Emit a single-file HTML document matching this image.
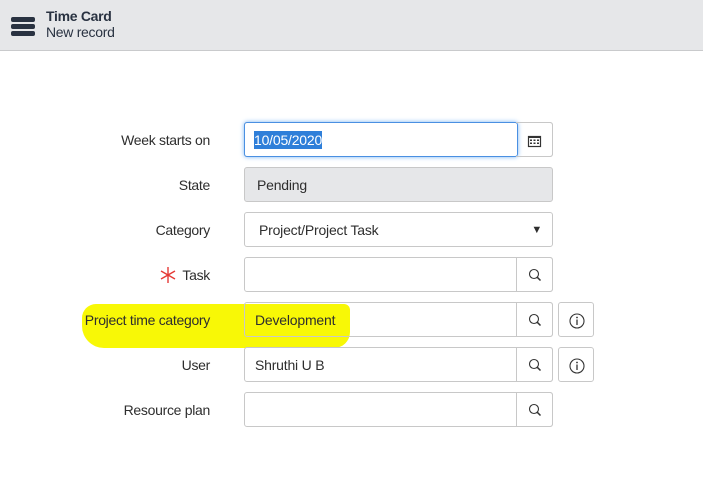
<!DOCTYPE html>
<html><head><style>
*{box-sizing:border-box;margin:0;padding:0}
body{width:703px;height:477px;background:#fff;font-family:"Liberation Sans",sans-serif;position:relative;overflow:hidden;color:#2e2e2e}
.hdr{position:absolute;left:0;top:0;width:703px;height:51px;background:#e6e7e9;border-bottom:1px solid #c9cacc}
.ham{position:absolute;left:11px;width:24px;height:5px;background:#293241;border-radius:2px}
.t1{position:absolute;left:46px;top:8px;font-size:14px;color:#293241;font-weight:bold;letter-spacing:-0.3px}
.t2{position:absolute;left:46px;top:24px;font-size:14px;color:#293241;letter-spacing:-0.3px}
.hl{position:absolute;left:82px;top:304px;width:268px;height:44px;background:#f8f806;border-radius:14px 6px 16px 22px}
.lbl{position:absolute;right:493px;font-size:14px;color:#2e2e2e;line-height:16px;letter-spacing:-0.3px}
.in{position:absolute;left:244px;width:309px;height:35px;border:1px solid #c8c8c8;border-radius:3px;font-size:14px;padding-left:14px;line-height:35px;background:transparent;letter-spacing:-0.2px}
.btn{position:absolute;left:516px;width:37px;height:35px;border:1px solid #c8c8c8;border-radius:0 3px 3px 0}
.ib{position:absolute;left:558px;width:36px;height:35px;border:1px solid #c8c8c8;border-radius:3px}
svg{position:absolute;left:0;top:0}
</style></head><body>
<div class="hdr">
<div class="ham" style="top:17px"></div><div class="ham" style="top:24px"></div><div class="ham" style="top:31px"></div>
<div class="t1">Time Card</div><div class="t2">New record</div>
</div>
<div class="hl"></div>

<div class="lbl" style="top:132px">Week starts on</div>
<div class="lbl" style="top:177px">State</div>
<div class="lbl" style="top:222px">Category</div>
<div class="lbl" style="top:267px">Task</div>
<svg style="left:160px;top:266px" width="18" height="18"><g stroke="#e53935" stroke-width="1.4"><line x1="8" y1="1" x2="8" y2="17"/><line x1="1" y1="5" x2="15" y2="13"/><line x1="1" y1="13" x2="15" y2="5"/></g></svg>
<div class="lbl" style="top:312px">Project time category</div>
<div class="lbl" style="top:357px">User</div>
<div class="lbl" style="top:402px">Resource plan</div>

<div class="in" style="top:122px;width:309px"></div>
<div class="in" style="top:122px;width:274px;border:1px solid #4a90e2;box-shadow:0 0 5px #7ab4f5;border-radius:3px;padding-left:9px"><span style="background:#2f7fd9;color:#fff;line-height:18px;display:inline-block">10/05/2020</span></div>
<div class="btn" style="top:122px;border-left:none">
<svg width="37" height="35"><g fill="none" stroke="#333" stroke-width="1.2"><rect x="12.5" y="13.5" width="12" height="10"/></g><g fill="#333"><rect x="12" y="13" width="13" height="2"/><rect x="14" y="16.5" width="2" height="1.5"/><rect x="17.5" y="16.5" width="2" height="1.5"/><rect x="21" y="16.5" width="2" height="1.5"/><rect x="14" y="19.5" width="2" height="1.5"/><rect x="17.5" y="19.5" width="2" height="1.5"/><rect x="21" y="19.5" width="2" height="1.5"/></g></svg></div>

<div class="in" style="top:167px;background:#e6e7e9;padding-left:12px">Pending</div>
<div class="in" style="top:212px">Project/Project Task<span style="position:absolute;right:10px;font-size:11px">▼</span></div>
<div class="in" style="top:257px"></div>
<div class="in" style="top:302px;padding-left:10px">Development</div>
<div class="in" style="top:347px;padding-left:10px">Shruthi U B</div>
<div class="in" style="top:392px"></div>

<div class="btn" style="top:257px"><svg width="37" height="35"><circle cx="17" cy="16" r="4.5" fill="none" stroke="#333" stroke-width="1.1"/><line x1="20.3" y1="19.3" x2="23.5" y2="22.5" stroke="#333" stroke-width="1.5"/></svg></div>
<div class="btn" style="top:302px"><svg width="37" height="35"><circle cx="17" cy="16" r="4.5" fill="none" stroke="#333" stroke-width="1.1"/><line x1="20.3" y1="19.3" x2="23.5" y2="22.5" stroke="#333" stroke-width="1.5"/></svg></div>
<div class="btn" style="top:347px"><svg width="37" height="35"><circle cx="17" cy="16" r="4.5" fill="none" stroke="#333" stroke-width="1.1"/><line x1="20.3" y1="19.3" x2="23.5" y2="22.5" stroke="#333" stroke-width="1.5"/></svg></div>
<div class="btn" style="top:392px"><svg width="37" height="35"><circle cx="17" cy="16" r="4.5" fill="none" stroke="#333" stroke-width="1.1"/><line x1="20.3" y1="19.3" x2="23.5" y2="22.5" stroke="#333" stroke-width="1.5"/></svg></div>

<div class="ib" style="top:302px"><svg width="36" height="35"><circle cx="18" cy="18" r="7" fill="none" stroke="#333" stroke-width="1.1"/><circle cx="18" cy="14.5" r="0.9" fill="#333"/><line x1="18" y1="16.5" x2="18" y2="22" stroke="#333" stroke-width="1.3"/></svg></div>
<div class="ib" style="top:347px"><svg width="36" height="35"><circle cx="18" cy="18" r="7" fill="none" stroke="#333" stroke-width="1.1"/><circle cx="18" cy="14.5" r="0.9" fill="#333"/><line x1="18" y1="16.5" x2="18" y2="22" stroke="#333" stroke-width="1.3"/></svg></div>
</body></html>
